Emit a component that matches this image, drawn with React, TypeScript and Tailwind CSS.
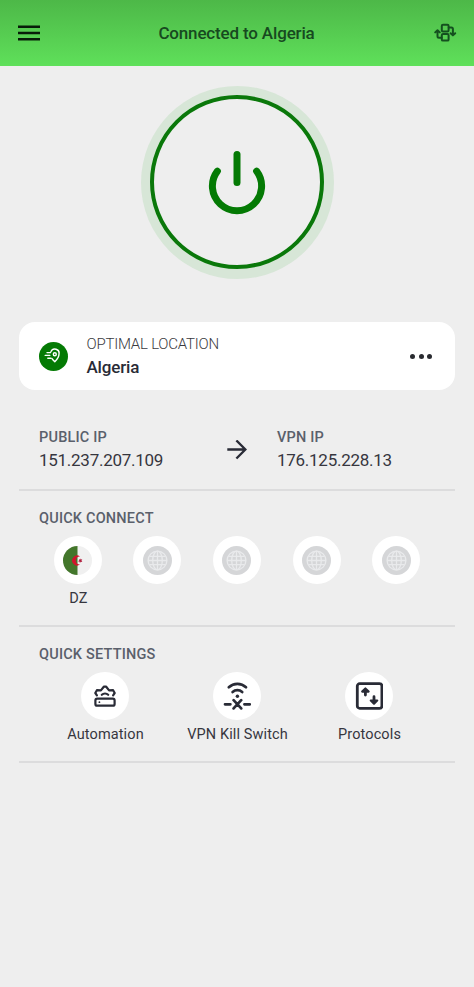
import React from 'react';

interface QuickItemProps {
  label?: string;
  children: React.ReactNode;
}

const QuickItem: React.FC<QuickItemProps> = ({ label, children }) => (
  <button className="flex flex-1 flex-col items-center">
    <span className="flex size-12 items-center justify-center rounded-full bg-white">{children}</span>
    {label && <span className="mt-[5px] whitespace-nowrap pl-px text-[14.5px] leading-5 tracking-[0.12px] text-[#36363e]">{label}</span>}
  </button>
);

const SectionTitle: React.FC<{ children: React.ReactNode }> = ({ children }) => (
  <h2 className="text-[14.5px] font-medium leading-5 tracking-[0.2px] text-[#5a606b]">{children}</h2>
);

const MenuIcon = () => (
  <svg width="22" height="16" viewBox="0 0 22 16" stroke="#071c08" strokeWidth="2.6">
    <path d="M0 1.8h22M0 8h22M0 14.2h22" />
  </svg>
);

const SwapServersIcon = () => (
  <svg width="24" height="24" viewBox="0 0 24 24" fill="none" stroke="#14501f" strokeWidth="2" strokeLinecap="round" strokeLinejoin="round">
    <rect x="8.8" y="3.8" width="6.8" height="6.6" rx="1.2" />
    <rect x="8.8" y="13" width="6.8" height="6.6" rx="1.2" />
    <path d="M15.8 6.4h2.6a1.5 1.5 0 0 1 1.5 1.5V14M17.6 12.2l2.3 2.2 2.3-2.2" />
    <path d="M8.6 16.8H6a1.5 1.5 0 0 1-1.5-1.5V9.6M2.2 11.4l2.3-2.2 2.3 2.2" />
  </svg>
);

const PowerIcon = () => (
  <svg className="mt-[2px]" width="58" height="66" viewBox="0 0 58 66" fill="none" stroke="#047a04" strokeWidth="7" strokeLinecap="round">
    <path d="M29 4.5v28" />
    <path d="M9.4 21.2a24.6 24.6 0 1 0 39.2 0" />
  </svg>
);

const FastPinIcon = () => (
  <svg width="18" height="16" viewBox="0 0 18 16" fill="none" stroke="#fff" strokeWidth="1.4" strokeLinecap="round" strokeLinejoin="round">
    <path d="M7 3.6a4.2 4.2 0 0 1 8 2.4c0 3-2 5.6-4.2 7.8-1.2-1.1-2.2-2.2-3-3.4" />
    <circle cx="10.8" cy="6.2" r="1.5" />
    <path d="M3 4.6h3.6M1.2 7.4h4.6M3.8 10.2h2.8" />
  </svg>
);

const AlgeriaFlag = () => (
  <svg width="29" height="29" viewBox="0 0 29 29">
    <circle cx="14.5" cy="14.5" r="14.5" fill="#f0f0f0" />
    <path d="M14.5 0a14.5 14.5 0 0 0 0 29z" fill="#43762b" />
    <path d="M17 10.4a5 5 0 1 0 0 8.2 4.1 4.1 0 1 1 0-8.2z" fill="#d0142c" />
    <path d="M17 12.2l.7 1.4 1.6-.3-.8 1.3.8 1.3-1.6-.2-.7 1.4-.6-1.5-1.6-.3 1.4-.8-.1-1.6 1 .8z" fill="#b01c3c" />
  </svg>
);

const GlobeIcon = () => (
  <svg width="29" height="29" viewBox="0 0 29 29" fill="none" stroke="#e9eaec" strokeWidth="1.3">
    <circle cx="14.5" cy="14.5" r="14.5" fill="#d5d6d8" stroke="none" />
    <circle cx="14.5" cy="14.5" r="9.4" />
    <ellipse cx="14.5" cy="14.5" rx="4.8" ry="9.4" />
    <path d="M14.5 5.1v18.8M5.1 14.5h18.8M6.4 10.4h16.2M6.4 18.6h16.2" />
  </svg>
);

const AutomationIcon = () => (
  <svg width="24" height="24" viewBox="0 0 24 24" fill="none" stroke="#292b36" strokeWidth="2.2" strokeLinecap="round" strokeLinejoin="round">
    <rect x="2.4" y="14.7" width="19.2" height="7" rx="1.8" />
    <path d="M3.9 11.3 2.3 9 3.9 6.2l4 .2 2.9-3.7h2.4l2.9 3.7 4-.2L21.7 9l-1.6 2.3" />
    <path d="M8.8 10.8a4.6 4.6 0 0 1 6.4 0" />
    <path d="M6.4 18.2h.01" strokeWidth="1.8" />
  </svg>
);

const KillSwitchIcon = () => (
  <svg width="28" height="28" viewBox="0 0 28 28" fill="none" stroke="#292b36" strokeWidth="2.7" strokeLinecap="round" strokeLinejoin="round">
    <path d="M5.8 5.3a12.4 12.4 0 0 1 17.2 0" />
    <path d="M9.6 10a7.2 7.2 0 0 1 9.6 0" />
    <path d="M14.4 14.3h.01" strokeWidth="3.4" />
    <path d="M2 22.3h5.4M21.4 22.3h5.4M10.6 18.2l7.6 8.2M18.2 18.2l-7.6 8.2" />
  </svg>
);

const ProtocolsIcon = () => (
  <svg width="28" height="28" viewBox="0 0 28 28" fill="none" stroke="#292b36" strokeWidth="2.8" strokeLinecap="round" strokeLinejoin="round">
    <rect x="2.3" y="1.7" width="24.6" height="24.6" rx="2.4" />
    <path d="M10.4 13.1V8.6M19 14.7v4.8" />
    <path d="M7.2 9.6l3.2-3.1 3.2 3.1zM15.8 18.5l3.2 3.1 3.2-3.1z" fill="#292b36" strokeWidth="2.2" />
  </svg>
);

const Divider = () => <div className="mx-[19px] h-[2px] shrink-0 bg-[#dcdcdd]" />;

export default function App() {
  return (
    <div className="flex h-[987px] w-[474px] flex-col overflow-hidden bg-[#eeeeee] font-['Roboto',sans-serif]">
      <header className="flex h-[66px] shrink-0 items-center justify-between bg-linear-to-b from-[#4db848] to-[#5fe05a] pl-[18px] pr-[17px]">
        <button aria-label="Menu">
          <MenuIcon />
        </button>
        <h1 className="text-[17px] font-medium leading-6 tracking-[-0.16px] text-[#17491f]">Connected to Algeria</h1>
        <button aria-label="Switch server">
          <SwapServersIcon />
        </button>
      </header>

      <div className="flex h-[256px] shrink-0 justify-center pt-[19.5px]">
        <button aria-label="Disconnect" className="flex size-[193px] items-center justify-center rounded-full bg-[#d7e6d7]">
          <span className="flex size-[174px] items-center justify-center rounded-full border-4 border-[#0a780a] bg-[#eeeeee]">
            <PowerIcon />
          </span>
        </button>
      </div>

      <section className="mx-[19px] flex h-[68px] shrink-0 items-center rounded-2xl bg-white pl-[19.5px] pr-[23px]">
        <span className="flex size-[29px] items-center justify-center rounded-full bg-[#047a04]">
          <FastPinIcon />
        </span>
        <div className="ml-[19px] flex-1">
          <p className="text-[15px] font-light leading-[23px] tracking-[-0.22px] text-[#3a3a40]">OPTIMAL LOCATION</p>
          <p className="text-[17px] font-medium leading-[23px] tracking-[-0.16px] text-[#292b36]">Algeria</p>
        </div>
        <button aria-label="More" className="flex gap-[3.5px]">
          <span className="size-[5px] rounded-full bg-[#292b30]" />
          <span className="size-[5px] rounded-full bg-[#292b30]" />
          <span className="size-[5px] rounded-full bg-[#292b30]" />
        </button>
      </section>

      <section className="flex h-[99px] shrink-0 items-start px-[39px] pt-[38px]">
        <div className="w-[188px]">
          <SectionTitle>PUBLIC IP</SectionTitle>
          <p className="text-[17px] leading-[25px] tracking-[-0.27px] text-[#36363e]">151.237.207.109</p>
        </div>
        <svg className="mt-[11.5px]" width="20" height="20" viewBox="0 0 20 20" fill="none" stroke="#292b36" strokeWidth="2.4">
          <path d="M.3 9.5h18M9.4 .5l9 9-9 9" />
        </svg>
        <div className="ml-[30px]">
          <SectionTitle>VPN IP</SectionTitle>
          <p className="text-[17px] leading-[25px] tracking-[-0.27px] text-[#36363e]">176.125.228.13</p>
        </div>
      </section>
      <Divider />

      <section className="h-[134px] shrink-0 px-[38px] pt-[18px]">
        <div className="pl-px">
          <SectionTitle>QUICK CONNECT</SectionTitle>
        </div>
        <div className="mt-[7px] flex">
          <QuickItem label="DZ">
            <AlgeriaFlag />
          </QuickItem>
          {[1, 2, 3, 4].map((slot) => (
            <QuickItem key={slot}>
              <GlobeIcon />
            </QuickItem>
          ))}
        </div>
      </section>
      <Divider />

      <section className="h-[134px] shrink-0 px-[39px] pt-[18px]">
        <SectionTitle>QUICK SETTINGS</SectionTitle>
        <div className="mt-[7px] flex">
          <QuickItem label="Automation">
            <AutomationIcon />
          </QuickItem>
          <QuickItem label="VPN Kill Switch">
            <KillSwitchIcon />
          </QuickItem>
          <QuickItem label="Protocols">
            <ProtocolsIcon />
          </QuickItem>
        </div>
      </section>
      <Divider />
    </div>
  );
}
